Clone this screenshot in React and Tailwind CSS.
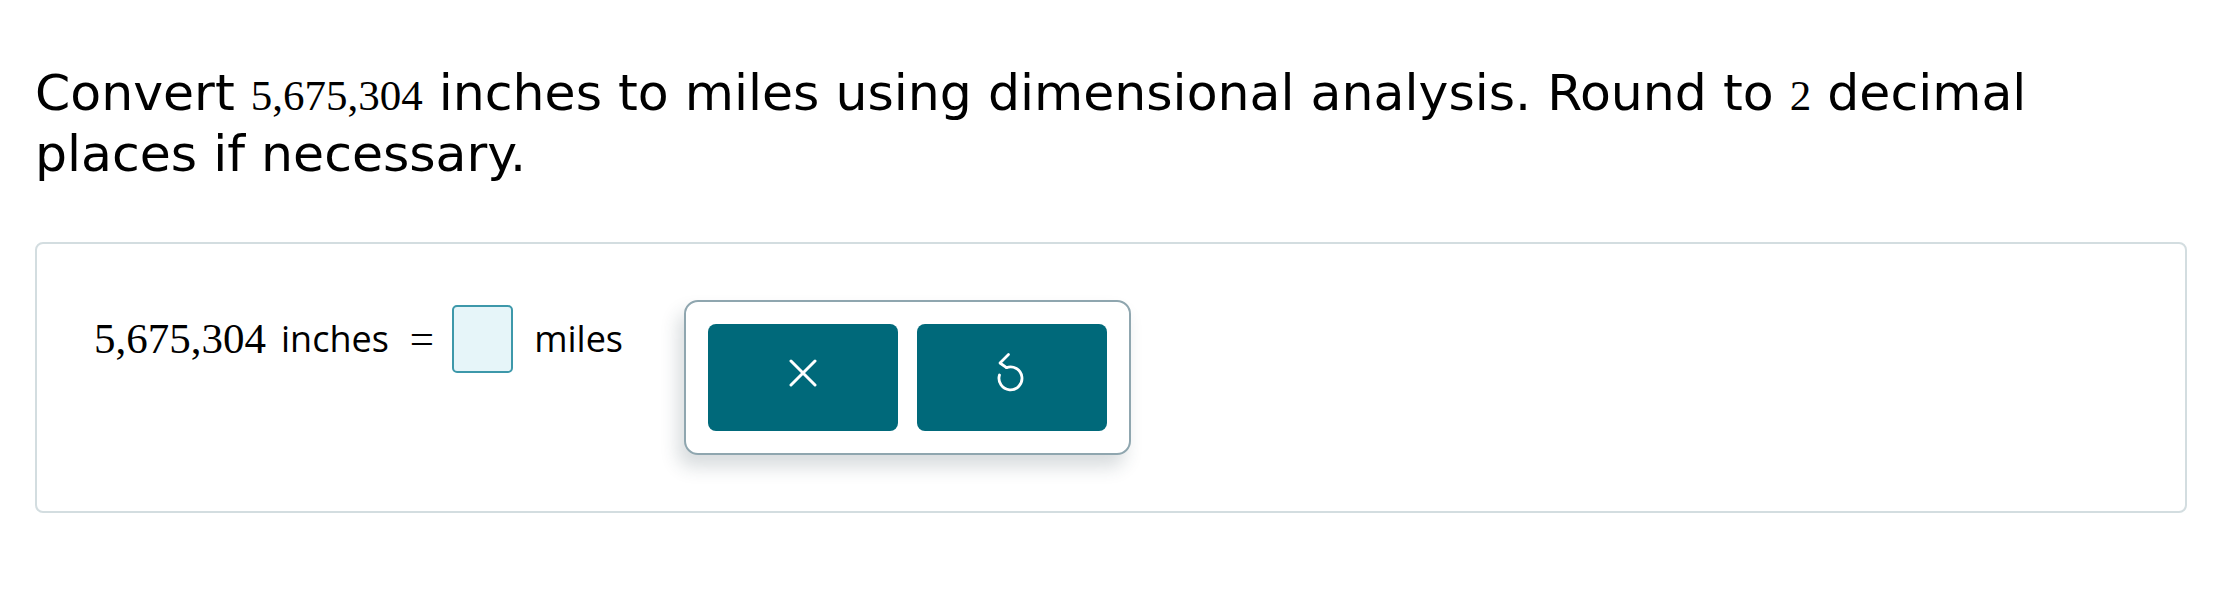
import React from 'react';

const sans = "font-['DejaVu_Sans','Verdana',sans-serif]";
const serif = "font-['Liberation_Serif','Times_New_Roman',serif]";
const unit = "font-['Open_Sans','Noto_Sans',sans-serif]";

function ClearIcon() {
  return (
    <svg width="28" height="28" viewBox="0 0 28 28" fill="none" stroke="white" strokeWidth="3" strokeLinecap="round">
      <path d="M2 2L26 26M26 2L2 26" />
    </svg>
  );
}

function UndoIcon() {
  return (
    <svg width="32" height="44" viewBox="0 0 32 44" fill="none" stroke="white" strokeWidth="2.8" strokeLinecap="round" strokeLinejoin="round">
      <path d="M14.5 3.5L6 12L12.5 16.6" />
      <path d="M12.5 16.6A11.5 11.5 0 1 1 5.5 24" />
    </svg>
  );
}

export default function App() {
  return (
    <div className="min-h-screen bg-white pl-[35px] pr-[33px] pt-[64px] text-black">
      <p className={`${sans} pr-[60px] text-[50.5px] leading-[58px]`}>
        Convert <span className={`${serif} text-[43px]`}>5,675,304</span> inches to miles using dimensional analysis. Round to{' '}
        <span className={`${serif} text-[43px]`}>2</span> decimal places if necessary.
      </p>

      <div className="mt-[59px] flex items-start rounded-[8px] border-2 border-[#d3dde0] pl-[57px] pt-[56px] pb-[56px]">
        <div className="mt-[5px] flex items-center">
          <span className={`${serif} text-[43px]`}>5,675,304</span>
          <span className={`${unit} ml-[15px] text-[36px]`}>inches</span>
          <span className={`${serif} ml-[21px] text-[43px]`}>=</span>
          <div className="ml-[18px] h-[68px] w-[61px] rounded-[5px] border-2 border-[#3d98aa] bg-[#e6f5f9]" />
          <span className={`${unit} ml-[21px] text-[36px]`}>miles</span>
        </div>

        <div className="ml-[61px] flex gap-[19px] rounded-[14px] border-2 border-[#8fa6af] bg-white p-[22px] shadow-[-6px_12px_18px_rgba(40,60,70,0.18)]">
          <button className="flex h-[107px] w-[190px] items-center justify-center rounded-[8px] bg-[#00697a] pb-[10px]">
            <ClearIcon />
          </button>
          <button className="flex h-[107px] w-[190px] items-center justify-center rounded-[8px] bg-[#00697a] pb-[10px] pr-[4px]">
            <UndoIcon />
          </button>
        </div>
      </div>
    </div>
  );
}
